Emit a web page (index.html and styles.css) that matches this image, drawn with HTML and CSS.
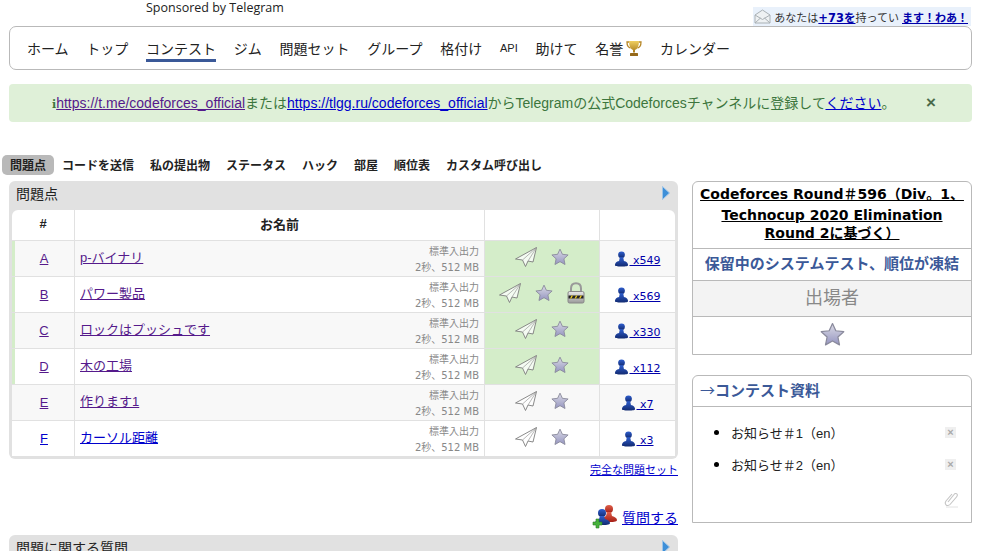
FILE: index.html
```html
<!DOCTYPE html>
<html lang="ja">
<head>
	<meta charset="UTF-8">
	<title>Codeforces Round 596 問題点</title>
	<link rel="stylesheet" href="styles.css">
</head>
<body>
	<svg class="defs" width="0" height="0">
		<defs>
			<linearGradient id="star-fill" x1="0" y1="0" x2="0" y2="1">
				<stop offset="0" stop-color="#dcdce6"/>
				<stop offset="1" stop-color="#9494c0"/>
			</linearGradient>
			<linearGradient id="person-fill" x1="0" y1="0" x2="0" y2="1">
				<stop offset="0" stop-color="#2f5fd0"/>
				<stop offset="1" stop-color="#122a70"/>
			</linearGradient>
			<linearGradient id="red-fill" x1="0" y1="0" x2="0" y2="1">
				<stop offset="0" stop-color="#e0604a"/>
				<stop offset="1" stop-color="#a51f16"/>
			</linearGradient>
			<linearGradient id="gold-fill" x1="0" y1="0" x2="0" y2="1">
				<stop offset="0" stop-color="#f0cf60"/>
				<stop offset="1" stop-color="#a87a1c"/>
			</linearGradient>
			<linearGradient id="lock-fill" x1="0" y1="0" x2="0" y2="1">
				<stop offset="0" stop-color="#e8e8e8"/>
				<stop offset="1" stop-color="#9a9a9a"/>
			</linearGradient>
			<symbol id="i-plane" viewBox="0 0 22 20">
				<path d="M21.5 .5 L.5 12 L7.5 13 L10.5 19.5 L13 14 L18 15 Z" fill="#fff" fill-opacity=".75" stroke="#7d7d7d" stroke-width=".9" stroke-linejoin="round"/>
				<path d="M21.5 .5 L7.5 13 M21.5 .5 L13 14" fill="none" stroke="#9a9a9a" stroke-width=".7"/>
			</symbol>
			<symbol id="i-star" viewBox="0 0 24 24">
				<path d="M12 1.5 L15.2 8.4 L22.8 9.3 L17.2 14.4 L18.7 22 L12 18.2 L5.3 22 L6.8 14.4 L1.2 9.3 L8.8 8.4 Z" fill="url(#star-fill)" stroke="#8a8a9c" stroke-width="1.2" stroke-linejoin="round"/>
			</symbol>
			<symbol id="i-lock" viewBox="0 0 18 22">
				<path d="M4 10 V6.5 C4 3 6 1.2 9 1.2 S14 3 14 6.5 V10" fill="none" stroke="#999" stroke-width="2"/>
				<rect x="1" y="9.5" width="16" height="11.5" rx="1.5" fill="url(#lock-fill)" stroke="#888"/>
				<rect x="1.5" y="13.5" width="15" height="3" fill="#222"/>
				<path d="M3 16.5 L4.5 13.5 H6 L4.5 16.5 Z M7.5 16.5 L9 13.5 H10.5 L9 16.5 Z M12 16.5 L13.5 13.5 H15 L13.5 16.5 Z" fill="#e8c61c"/>
			</symbol>
			<symbol id="i-person" viewBox="0 0 16 17">
				<circle cx="8" cy="4" r="3.6" fill="url(#person-fill)"/>
				<path d="M6.2 6.5 H9.8 L10.6 10.5 C13.5 11 15 12.5 15 15 C15 16.2 13 16.6 8 16.6 S1 16.2 1 15 C1 12.5 2.5 11 5.4 10.5 Z" fill="url(#person-fill)"/>
			</symbol>
			<symbol id="i-arrow" viewBox="0 0 8 14">
				<path d="M.5 .5 L7.5 7 L.5 13.5 Z" fill="#3d8fd8" stroke="#9cc4e8"/>
			</symbol>
		</defs>
	</svg>

	<header class="top">
		<span class="sponsor">Sponsored by Telegram</span>
		<div class="notice">
			<svg class="notice-icon" width="17" height="15" viewBox="0 0 17 15">
				<path d="M1 6 L8.5 1 L16 6 V14 H1 Z" fill="#eef1f3" stroke="#a9b0b4"/>
				<path d="M1 6 L8.5 10.5 L16 6 M1 14 L6.5 9 M16 14 L10.5 9" fill="none" stroke="#a9b0b4"/>
			</svg>
			<span>あなたは<a class="strong wide" href="#">+73を</a>持ってい <a class="strong" href="#">ます！わあ！</a></span>
		</div>
	</header>

	<nav class="menu">
		<a href="#">ホーム</a>
		<a href="#">トップ</a>
		<a class="current" href="#">コンテスト</a>
		<a href="#">ジム</a>
		<a href="#">問題セット</a>
		<a href="#">グループ</a>
		<a href="#">格付け</a>
		<a class="api" href="#">API</a>
		<a href="#">助けて</a>
		<a class="honor" href="#">名誉
			<svg width="16" height="17" viewBox="0 0 16 17">
				<path d="M3 2 H1 C1 6 2.5 7.5 4.5 8 M13 2 H15 C15 6 13.5 7.5 11.5 8" fill="none" stroke="#b8892a" stroke-width="1.3"/>
				<path d="M3 1 H13 C13 6 11.5 9 9 10 V12.5 H7 V10 C4.5 9 3 6 3 1 Z" fill="url(#gold-fill)"/>
				<rect x="4" y="13" width="8" height="3" rx=".5" fill="#96691a"/>
			</svg>
		</a>
		<a href="#">カレンダー</a>
	</nav>

	<div class="alert">
		<span class="alert-text"><b class="alert-i">i</b><a class="seen" href="#">https://t.me/codeforces_official</a>または<a href="#">https://tlgg.ru/codeforces_official</a>からTelegramの公式Codeforcesチャンネルに登録して<a href="#">ください</a>。</span>
		<span class="alert-close">×</span>
	</div>

	<ul class="tabs">
		<li class="active">問題点</li>
		<li>コードを送信</li>
		<li>私の提出物</li>
		<li>ステータス</li>
		<li>ハック</li>
		<li>部屋</li>
		<li>順位表</li>
		<li>カスタム呼び出し</li>
	</ul>

	<div class="content">
		<main class="left">
			<section class="panel">
				<div class="panel-title">
					<span>問題点</span>
					<svg width="8" height="14"><use href="#i-arrow"/></svg>
				</div>
				<table class="problems">
					<colgroup>
						<col class="col-id">
						<col>
						<col class="col-state">
						<col class="col-count">
					</colgroup>
					<tr>
						<th>#</th>
						<th>お名前</th>
						<th></th>
						<th></th>
					</tr>
					<tr class="shade solved">
						<td class="id"><a class="seen" href="#">A</a></td>
						<td><div class="name"><a class="seen" href="#">p-バイナリ</a><span class="limits">標準入出力<br>2秒、512 MB</span></div></td>
						<td class="state ok"><div class="acts"><svg class="plane"><use href="#i-plane"/></svg><svg class="star"><use href="#i-star"/></svg></div></td>
						<td class="count"><a href="#"><svg class="person"><use href="#i-person"/></svg> x549</a></td>
					</tr>
					<tr class="solved">
						<td class="id"><a class="seen" href="#">B</a></td>
						<td><div class="name"><a class="seen" href="#">パワー製品</a><span class="limits">標準入出力<br>2秒、512 MB</span></div></td>
						<td class="state ok"><div class="acts"><svg class="plane"><use href="#i-plane"/></svg><svg class="star"><use href="#i-star"/></svg><svg class="lock"><use href="#i-lock"/></svg></div></td>
						<td class="count"><a href="#"><svg class="person"><use href="#i-person"/></svg> x569</a></td>
					</tr>
					<tr class="shade solved">
						<td class="id"><a class="seen" href="#">C</a></td>
						<td><div class="name"><a class="seen" href="#">ロックはプッシュです</a><span class="limits">標準入出力<br>2秒、512 MB</span></div></td>
						<td class="state ok"><div class="acts"><svg class="plane"><use href="#i-plane"/></svg><svg class="star"><use href="#i-star"/></svg></div></td>
						<td class="count"><a href="#"><svg class="person"><use href="#i-person"/></svg> x330</a></td>
					</tr>
					<tr class="solved">
						<td class="id"><a class="seen" href="#">D</a></td>
						<td><div class="name"><a class="seen" href="#">木の工場</a><span class="limits">標準入出力<br>2秒、512 MB</span></div></td>
						<td class="state ok"><div class="acts"><svg class="plane"><use href="#i-plane"/></svg><svg class="star"><use href="#i-star"/></svg></div></td>
						<td class="count"><a href="#"><svg class="person"><use href="#i-person"/></svg> x112</a></td>
					</tr>
					<tr class="shade">
						<td class="id"><a class="seen" href="#">E</a></td>
						<td><div class="name"><a class="seen" href="#">作ります1</a><span class="limits">標準入出力<br>2秒、512 MB</span></div></td>
						<td class="state"><div class="acts"><svg class="plane"><use href="#i-plane"/></svg><svg class="star"><use href="#i-star"/></svg></div></td>
						<td class="count"><a href="#"><svg class="person"><use href="#i-person"/></svg> x7</a></td>
					</tr>
					<tr>
						<td class="id"><a href="#">F</a></td>
						<td><div class="name"><a href="#">カーソル距離</a><span class="limits">標準入出力<br>2秒、512 MB</span></div></td>
						<td class="state"><div class="acts"><svg class="plane"><use href="#i-plane"/></svg><svg class="star"><use href="#i-star"/></svg></div></td>
						<td class="count"><a href="#"><svg class="person"><use href="#i-person"/></svg> x3</a></td>
					</tr>
				</table>
			</section>

			<a class="full-set" href="#">完全な問題セット</a>

			<div class="ask">
				<svg width="26" height="26" viewBox="0 0 26 26">
					<circle cx="17" cy="5" r="4" fill="url(#red-fill)"/>
					<path d="M15 8 H19 L20 12 C23 13 25 14 25 16 C25 18 20 18 17 18 S10 18 10 16 C10 14 12 13 14 12 Z" fill="url(#red-fill)"/>
					<circle cx="10" cy="9" r="4" fill="url(#person-fill)"/>
					<path d="M8 12 H12 L13 15 C16 16 18 17 18 19 C18 21 13 21 10 21 S3 21 3 19 C3 17 5 16 7 15 Z" fill="url(#person-fill)"/>
					<path d="M4 15 H7 V18 H10 V21 H7 V24 H4 V21 H1 V18 H4 Z" fill="#46b23c" stroke="#2b7a26" stroke-width=".6"/>
				</svg>
				<a href="#">質問する</a>
			</div>

			<section class="panel panel-cut">
				<div class="panel-title">
					<span>問題に関する質問</span>
					<svg width="8" height="14"><use href="#i-arrow"/></svg>
				</div>
			</section>
		</main>

		<aside class="side">
			<section class="info">
				<a class="round" href="#">Codeforces Round＃596（Div。1、Technocup 2020 Elimination Round 2に基づく）</a>
				<div class="phase">保留中のシステムテスト、順位が凍結</div>
				<div class="contestant">出場者</div>
				<div class="fav"><svg width="25" height="25"><use href="#i-star"/></svg></div>
			</section>

			<section class="materials">
				<h3><span class="thin">→</span>コンテスト資料</h3>
				<ul>
					<li><span>お知らせ＃1（en）</span><span class="del">×</span></li>
					<li><span>お知らせ＃2（en）</span><span class="del">×</span></li>
				</ul>
				<div class="clip">
					<svg width="15" height="17" viewBox="0 0 15 17">
						<path d="M4 11 L10 3.5 C11 2 13 2.5 13.3 3.6 C13.6 4.6 13 5.4 12.5 6 L6 13.5 C4.8 14.8 3 14.8 2 13.8 C1 12.8 1.2 11.2 2 10 L8 3" fill="none" stroke="#c4c4c4" stroke-width="1.1"/>
						<path d="M2 16 H14" stroke="#e2e2e2"/>
					</svg>
				</div>
			</section>
		</aside>
	</div>
</body>
</html>
```
FILE: styles.css
```css
html,body,ul,li,h3 {
	margin: 0;
	padding: 0;
}
html,body {
	height: 100%;
	overflow: hidden;
}
body {
	background: #fff;
	color: #222;
	font-family: "Liberation Sans", "Noto Sans CJK JP", sans-serif;
	font-size: 13px;
}
li {
	list-style: none;
}
a {
	color: #0000cc;
}
a.seen {
	color: #551a8b;
}
.defs {
	position: absolute;
}

/* top line */
.top {
	display: flex;
	justify-content: space-between;
	height: 26px;
	padding: 0 16px 0 146px;
}
.sponsor {
	font-family: "Open Sans", sans-serif;
	font-size: 12.5px;
	line-height: 16px;
	color: #222;
}
.notice {
	display: flex;
	align-items: center;
	gap: 3px;
	height: 19px;
	margin-top: 7px;
	padding: 0 3px 0 1px;
	background: #e9f1fb;
	font-size: 11px;
	color: #333;
	white-space: nowrap;
}
.notice a.strong {
	color: #0000aa;
	font-weight: bold;
}
.notice a.wide {
	font-family: "DejaVu Sans", "Noto Sans CJK JP", sans-serif;
	font-size: 11.5px;
}

/* main menu */
.menu {
	display: flex;
	align-items: center;
	gap: 17.75px;
	height: 42px;
	margin: 0 15px 0 9px;
	padding-left: 17px;
	border: 1px solid #b9b9b9;
	border-radius: 7px;
}
.menu a {
	position: relative;
	display: flex;
	align-items: center;
	gap: 3px;
	font-size: 14px;
	color: #222;
	text-decoration: none;
	white-space: nowrap;
}
.menu a.current:after {
	content: '';
	position: absolute;
	left: 0;
	right: 0;
	bottom: -4px;
	height: 3px;
	background: #3b5998;
}
.menu a.api {
	font-size: 11px;
}

/* alert */
.alert {
	display: flex;
	justify-content: space-between;
	align-items: center;
	height: 38px;
	margin: 14px 15px 0 9px;
	padding: 0 36px 0 43px;
	background: #dff0d8;
	border-radius: 4px;
	color: #3c763d;
	font-size: 14px;
	white-space: nowrap;
}
.alert-text {
	margin-bottom: 2px;
}
.alert-i {
	font-family: "DejaVu Serif", serif;
	font-size: 11px;
}
.alert-close {
	font-size: 17px;
	font-weight: bold;
	color: #4a6a4a;
}

/* tabs */
.tabs {
	display: flex;
	margin: 33px 0 6px 2px;
	font-size: 12px;
	font-weight: bold;
	line-height: 18px;
}
.tabs li {
	padding: 2px 8px 0;
	white-space: nowrap;
}
.tabs .active {
	background: #b9b9b9;
	border-radius: 5px;
}

/* two columns */
.content {
	display: flex;
	gap: 14px;
	margin: 0 15px 0 9px;
}
.left {
	width: 669px;
	flex: none;
}
.side {
	flex: 1;
}

/* grey panel */
.panel {
	padding: 0 3px 3px;
	background: #e1e1e1;
	border-radius: 6px;
}
.panel-title {
	display: flex;
	justify-content: space-between;
	height: 29px;
	padding: 0 5px 0 4px;
	font-size: 14px;
	line-height: 26px;
	color: #222;
}
.panel-title svg {
	margin-top: 5px;
}
.panel-cut {
	height: 40px;
	margin-top: 5px;
}

/* table */
.problems {
	width: 100%;
	table-layout: fixed;
	border-collapse: separate;
	border-spacing: 0;
	background: #fff;
	border-radius: 6px 6px 0 0;
}
.col-id {
	width: 62px;
}
.col-state {
	width: 115px;
}
.col-count {
	width: 76px;
}
.problems th,.problems td {
	height: 35px;
	padding: 0;
	border-bottom: 1px solid #e1e1e1;
	border-left: 1px solid #e1e1e1;
	font-size: 13px;
}
.problems tr:last-child td {
	border-bottom: 0;
	height: 35px;
}
.problems th {
	height: 31px;
	padding-bottom: 3px;
	box-sizing: border-box;
	font-size: 13px;
	color: #222;
}
.problems th:first-child,.problems td:first-child {
	border-left: 0;
}
.shade td {
	background: #f8f8f8;
}
.solved td:first-child {
	box-shadow: inset 3px 0 0 #d4edc9;
}
.problems td.id {
	padding-left: 2px;
	text-align: center;
}
.name {
	display: flex;
	justify-content: space-between;
	align-items: center;
	padding: 0 5px;
}
.name > a {
	margin-bottom: 5px;
}
.limits {
	padding-top: 3px;
	font-family: "DejaVu Sans", "Noto Sans CJK JP", sans-serif;
	font-size: 10px;
	line-height: 16px;
	color: #888;
	text-align: right;
	white-space: nowrap;
}
.problems td.ok {
	background: #d4edc9;
}
.acts {
	display: flex;
	justify-content: center;
	align-items: center;
	gap: 14px;
	margin-bottom: 3px;
}
.plane {
	width: 22px;
	height: 20px;
}
.star {
	width: 18px;
	height: 18px;
}
.lock {
	width: 18px;
	height: 22px;
}
.count {
	text-align: center;
	font-family: "DejaVu Sans", sans-serif;
	font-size: 11px !important;
}
.count a {
	color: #0000aa;
}
.person {
	width: 15px;
	height: 16px;
	vertical-align: -3px;
}

/* links under the table */
.full-set {
	display: block;
	margin-top: 4px;
	text-align: right;
	font-size: 11px;
	line-height: 14px;
}
.ask {
	display: flex;
	justify-content: flex-end;
	align-items: center;
	gap: 4px;
	height: 26px;
	margin-top: 27px;
	font-size: 14px;
}

/* sidebar */
.info,.materials {
	border: 1px solid #b9b9b9;
	border-radius: 6px 6px 0 0;
}
.round {
	display: block;
	padding: 0 6px 6px;
	font-family: "DejaVu Sans", "Noto Sans CJK JP", sans-serif;
	font-size: 14px;
	font-weight: bold;
	line-height: 18px;
	color: #000;
	text-align: center;
}
.round::first-line {
	line-height: 24px;
}
.phase {
	height: 31px;
	border-top: 1px solid #b9b9b9;
	font-size: 15px;
	font-weight: bold;
	line-height: 30px;
	color: #3b5998;
	text-align: center;
	white-space: nowrap;
}
.contestant {
	height: 35px;
	border-top: 1px solid #b9b9b9;
	background: #f3f3f3;
	font-size: 18px;
	line-height: 35px;
	color: #888;
	text-align: center;
}
.fav {
	display: flex;
	justify-content: center;
	align-items: center;
	height: 34px;
	padding-bottom: 3px;
	border-top: 1px solid #b9b9b9;
}
.materials {
	height: 146px;
	margin-top: 20px;
}
.materials h3 {
	height: 30px;
	padding-left: 7px;
	border-bottom: 1px solid #b9b9b9;
	font-family: "Noto Sans CJK JP", sans-serif;
	font-size: 15px;
	line-height: 27px;
	color: #3b5998;
}
.materials h3 .thin {
	font-weight: normal;
}
.materials ul {
	padding: 9px 15px 0 21px;
}
.materials li {
	position: relative;
	display: flex;
	justify-content: space-between;
	align-items: center;
	height: 32px;
	padding-left: 17px;
	font-size: 13px;
}
.materials li:before {
	content: '';
	position: absolute;
	left: 0;
	top: 14px;
	width: 5px;
	height: 5px;
	border-radius: 50%;
	background: #000;
}
.del {
	width: 11px;
	height: 11px;
	background: #efefef;
	font-size: 11px;
	line-height: 11px;
	font-weight: bold;
	color: #aaa;
	text-align: center;
}
.clip {
	display: flex;
	justify-content: flex-end;
	margin-top: 11px;
	padding-right: 12px;
}
```
